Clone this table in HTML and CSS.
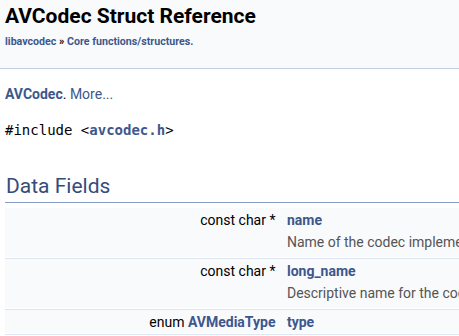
FILE: index.html
```html
<!DOCTYPE html>
<html lang="en">
<head>
    <meta charset="UTF-8">
    <title>FFmpeg: AVCodec Struct Reference</title>
    <link rel="stylesheet" href="styles.css">
</head>
<body>
    <div class="header">
        <div class="headertitle">
            <div class="title">AVCodec Struct Reference</div>
            <div class="ingroups"><a href="#">libavcodec</a> &raquo; <a href="#">Core functions/structures.</a></div>
        </div>
    </div>

    <div class="contents">
        <p class="brief"><a class="el" href="#">AVCodec</a>. <a href="#">More...</a></p>

        <p class="include">#include &lt;<a class="el" href="#">avcodec.h</a>&gt;</p>

        <table class="memberdecls">
            <tr class="heading">
                <td colspan="2"><h2 class="groupheader">Data Fields</h2></td>
            </tr>
            <tr>
                <td class="memItemLeft">const char *&#160;</td>
                <td class="memItemRight"><a class="el" href="#">name</a></td>
            </tr>
            <tr>
                <td class="mdescLeft">&#160;</td>
                <td class="mdescRight">Name of the codec implementation.</td>
            </tr>
            <tr><td class="memSeparator" colspan="2">&#160;</td></tr>
            <tr>
                <td class="memItemLeft">const char *&#160;</td>
                <td class="memItemRight"><a class="el" href="#">long_name</a></td>
            </tr>
            <tr>
                <td class="mdescLeft">&#160;</td>
                <td class="mdescRight">Descriptive name for the codec, meant to be more human readable than name.</td>
            </tr>
            <tr><td class="memSeparator" colspan="2">&#160;</td></tr>
            <tr>
                <td class="memItemLeft">enum <a class="el" href="#">AVMediaType</a>&#160;</td>
                <td class="memItemRight"><a class="el" href="#">type</a></td>
            </tr>
            <tr><td class="memSeparator" colspan="2">&#160;</td></tr>
        </table>
    </div>
</body>
</html>
```

FILE: styles.css
```css
html {
    overflow: hidden;
}

body {
    margin: 0;
    font: 400 14px/22px Roboto, sans-serif;
    color: #000;
    background: #fff;
}

a {
    color: #3D578C;
    text-decoration: none;
}

a.el {
    font-weight: bold;
}

.header {
    background: #F9FAFC;
    border-bottom: 1px solid #C4CFE5;
    height: 68px;
}

.headertitle {
    padding: 2px 5px 0 5px;
}

.title {
    font-size: 21px;
    line-height: 28px;
    font-weight: bold;
}

.ingroups {
    margin-top: 5px;
    font-size: 10.65px;
    line-height: 14px;
    font-weight: bold;
}

.ingroups a {
    font-weight: bold;
}

.contents {
    padding: 0 0 0 5px;
}

.brief {
    margin: 14px 0 0 0;
}

.include {
    margin: 14px 0 0 0;
    font-family: "DejaVu Sans Mono", monospace;
    font-size: 14px;
    line-height: 22px;
}

.memberdecls {
    border-collapse: collapse;
    border-spacing: 0;
    margin-top: 31px;
    white-space: nowrap;
}

.memberdecls td {
    padding: 0;
    vertical-align: top;
}

.groupheader {
    margin: 0 0 5px 0;
    padding: 0 0 2px 1px;
    font-size: 21px;
    line-height: 28px;
    font-weight: normal;
    color: #354C7B;
    border-bottom: 1px solid #879ECB;
    width: 900px;
}

.memItemLeft,
.memItemRight,
.mdescLeft,
.mdescRight {
    background: #F9FAFC;
}

.memberdecls .memItemLeft {
    width: 267px;
    padding: 1px 0 0 8px;
    text-align: right;
}

.memberdecls .memItemRight {
    width: 620px;
    padding: 1px 0 0 8px;
}

.memberdecls .mdescLeft {
    padding: 0 8px 4px 8px;
}

.memberdecls .mdescRight {
    padding: 0 8px 4px 8px;
    color: #555;
}

.memberdecls .memSeparator {
    border-bottom: 1px solid #DEE4F0;
    line-height: 1px;
    font-size: 1px;
    height: 1px;
    padding: 0;
}
```
